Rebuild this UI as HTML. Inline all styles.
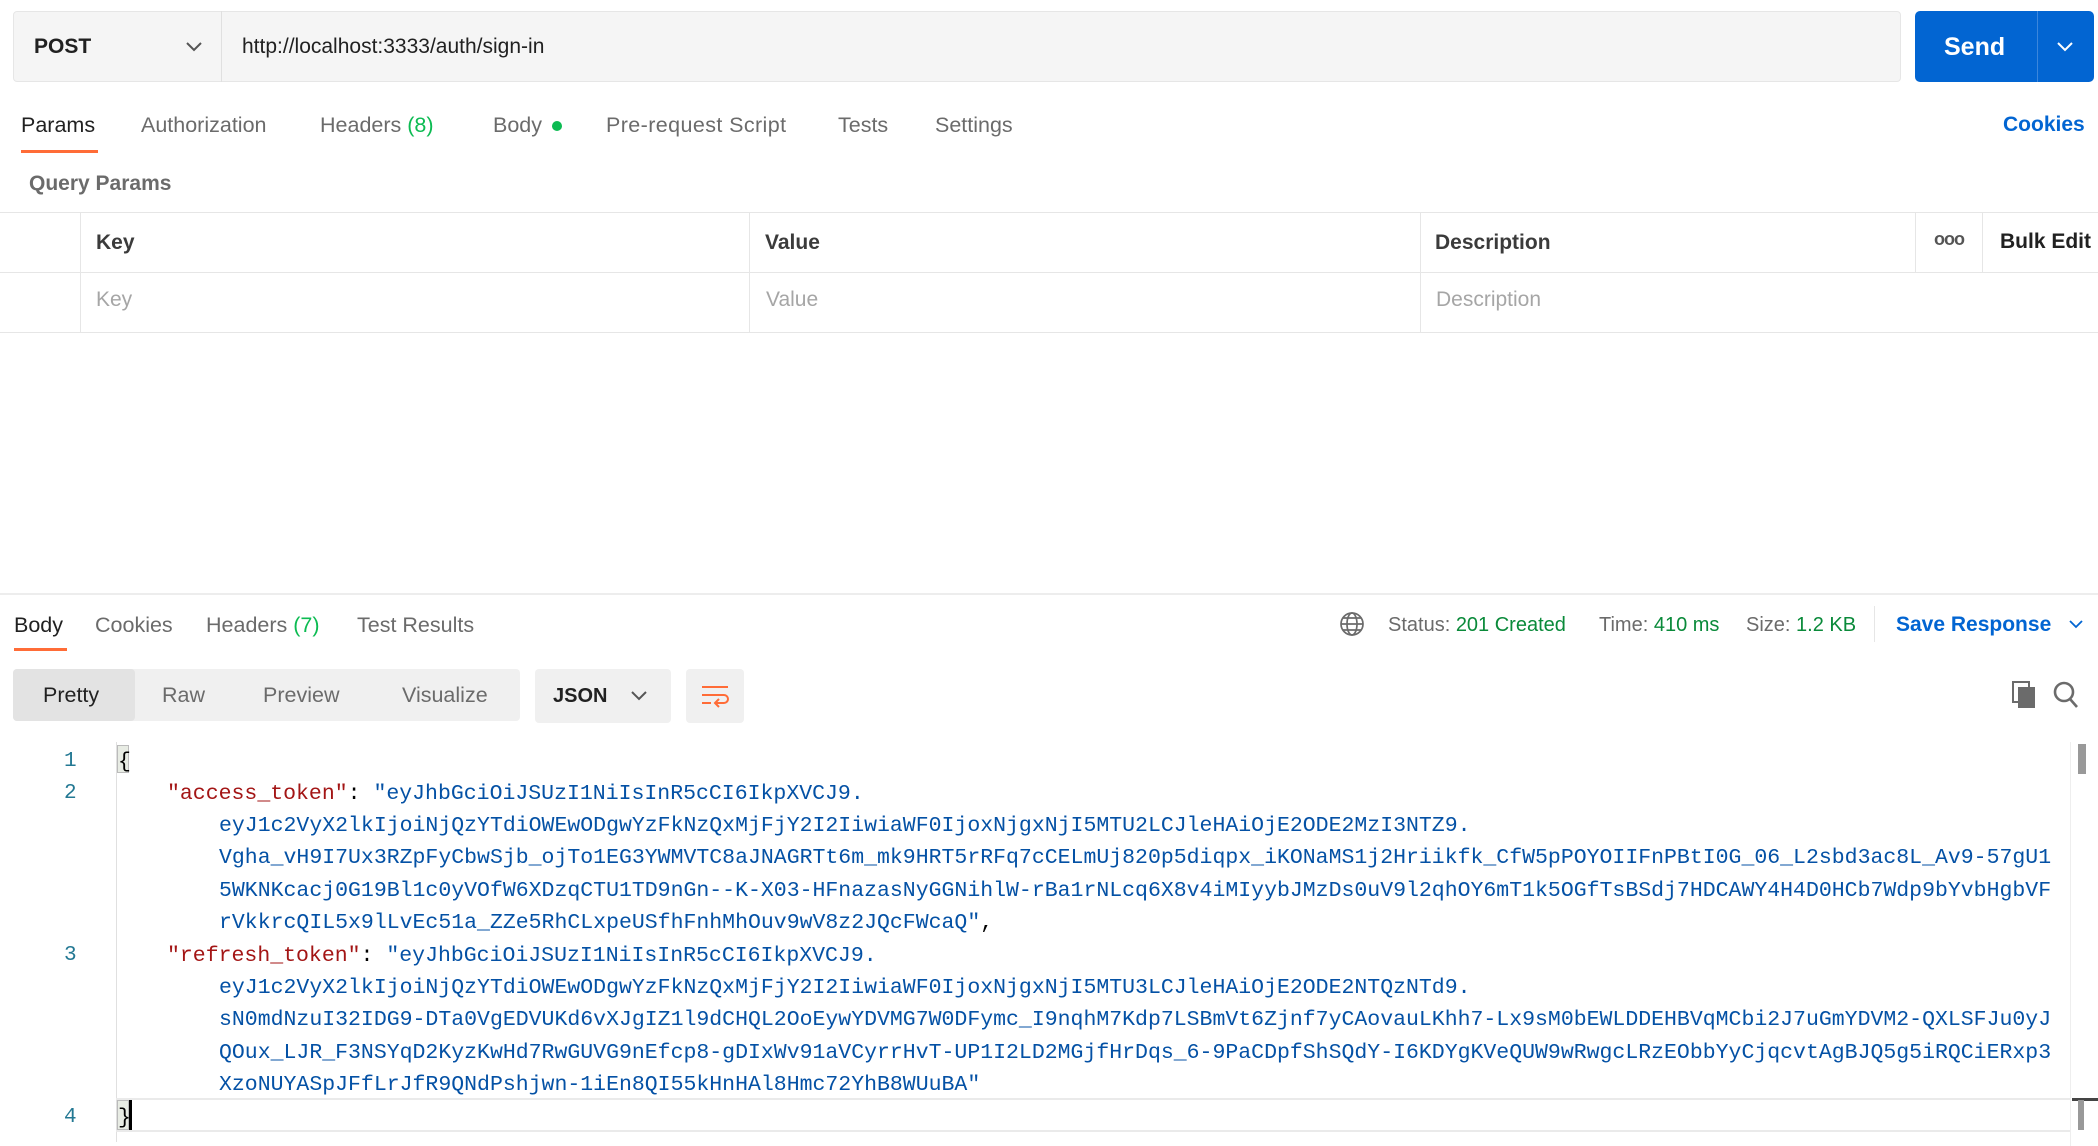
<!DOCTYPE html>
<html><head><meta charset="utf-8"><style>
*{box-sizing:border-box;margin:0;padding:0}
body{width:2098px;height:1146px;background:#fff;font-family:"Liberation Sans",sans-serif;color:#212121;position:relative;overflow:hidden}
.a{position:absolute;white-space:nowrap}
.tab{font-size:21.5px;color:#6b6b6b;top:113px}
.mono{font-family:"Liberation Mono",monospace;font-size:21.5px;color:#0451a5}
.ln{font-family:"Liberation Mono",monospace;font-size:21px;color:#237893;left:64px}
.hd{font-size:21px;font-weight:bold;color:#3b3b3b}
.ph{font-size:21px;color:#a6a6a6}
</style></head><body>
<div class="a" style="left:13px;top:11px;width:1888px;height:71px;background:#f5f5f5;border:1px solid #e6e6e6;border-radius:4px"></div>
<div class="a" style="left:221px;top:11px;width:1px;height:71px;background:#e0e0e0"></div>
<div class="a" style="left:34px;top:35px;font-size:21px;font-weight:bold;color:#212121">POST</div>
<svg class="a" style="left:185px;top:41px" width="18" height="12"><path d="M2 2l7 7 7-7" fill="none" stroke="#555" stroke-width="2"/></svg>
<div class="a" style="left:242px;top:35px;font-size:21px;color:#212121">http://localhost:3333/auth/sign-in</div>
<div class="a" style="left:1915px;top:11px;width:179px;height:71px;background:#0265d2;border-radius:5px"></div>
<div class="a" style="left:2037px;top:11px;width:1px;height:71px;background:#3b86dc"></div>
<div class="a" style="left:1944px;top:33px;font-size:25px;font-weight:bold;color:#fff">Send</div>
<svg class="a" style="left:2056px;top:41px" width="18" height="12"><path d="M2 2l7 7 7-7" fill="none" stroke="#fff" stroke-width="2"/></svg>
<div class="a tab" style="left:21px;color:#212121">Params</div>
<div class="a" style="left:21px;top:150px;width:77px;height:3px;background:#ff6c37"></div>
<div class="a tab" style="left:141px">Authorization</div>
<div class="a tab" style="left:320px">Headers <span style="color:#0cbb52">(8)</span></div>
<div class="a tab" style="left:493px">Body</div>
<div class="a" style="left:552px;top:121px;width:10px;height:10px;border-radius:50%;background:#0cbb52"></div>
<div class="a tab" style="left:606px;letter-spacing:0.4px">Pre-request Script</div>
<div class="a tab" style="left:838px">Tests</div>
<div class="a tab" style="left:935px">Settings</div>
<div class="a" style="left:2003px;top:113px;font-size:21px;font-weight:bold;color:#0265d2">Cookies</div>
<div class="a" style="left:29px;top:172px;font-size:21px;font-weight:bold;color:#6b6b6b">Query Params</div>
<div class="a" style="left:0;top:212px;width:2098px;height:1px;background:#e6e6e6"></div>
<div class="a" style="left:0;top:272px;width:2098px;height:1px;background:#e6e6e6"></div>
<div class="a" style="left:0;top:332px;width:2098px;height:1px;background:#e6e6e6"></div>
<div class="a" style="left:80px;top:212px;width:1px;height:120px;background:#e6e6e6"></div>
<div class="a" style="left:749px;top:212px;width:1px;height:120px;background:#e6e6e6"></div>
<div class="a" style="left:1420px;top:212px;width:1px;height:120px;background:#e6e6e6"></div>
<div class="a" style="left:1915px;top:212px;width:1px;height:60px;background:#e6e6e6"></div>
<div class="a" style="left:1982px;top:212px;width:1px;height:60px;background:#e6e6e6"></div>
<div class="a hd" style="left:96px;top:231px">Key</div>
<div class="a hd" style="left:765px;top:231px">Value</div>
<div class="a hd" style="left:1435px;top:231px">Description</div>
<div class="a" style="left:1934px;top:229px;font-size:18px;font-weight:bold;color:#555;letter-spacing:-1px">ooo</div>
<div class="a hd" style="left:2000px;top:230px;color:#212121">Bulk Edit</div>
<div class="a ph" style="left:96px;top:288px">Key</div>
<div class="a ph" style="left:766px;top:288px">Value</div>
<div class="a ph" style="left:1436px;top:288px">Description</div>
<div class="a" style="left:0;top:593px;width:2098px;height:2px;background:#ededed"></div>
<div class="a tab" style="left:14px;top:613px;color:#212121">Body</div>
<div class="a" style="left:14px;top:648px;width:53px;height:3px;background:#ff6c37"></div>
<div class="a tab" style="left:95px;top:613px">Cookies</div>
<div class="a tab" style="left:206px;top:613px">Headers <span style="color:#0cbb52">(7)</span></div>
<div class="a tab" style="left:357px;top:613px">Test Results</div>
<svg class="a" style="left:1339px;top:611px" width="26" height="26" viewBox="0 0 26 26" fill="none" stroke="#6b6b6b" stroke-width="1.7"><circle cx="13" cy="13" r="11"/><ellipse cx="13" cy="13" rx="5" ry="11"/><path d="M2 13h22M4 7h18M4 19h18"/></svg>
<div class="a" style="left:1388px;top:614px;font-size:20px;color:#6b6b6b">Status: <span style="color:#0a8a3a">201 Created</span></div>
<div class="a" style="left:1599px;top:614px;font-size:20px;color:#6b6b6b">Time: <span style="color:#0a8a3a">410 ms</span></div>
<div class="a" style="left:1746px;top:614px;font-size:20px;color:#6b6b6b">Size: <span style="color:#0a8a3a">1.2 KB</span></div>
<div class="a" style="left:1874px;top:606px;width:1px;height:36px;background:#e6e6e6"></div>
<div class="a" style="left:1896px;top:613px;font-size:21px;font-weight:bold;color:#0265d2">Save Response</div>
<svg class="a" style="left:2068px;top:619px" width="16" height="11"><path d="M2 2l6 6 6-6" fill="none" stroke="#0265d2" stroke-width="1.8"/></svg>
<div class="a" style="left:13px;top:669px;width:507px;height:52px;background:#f0f0f0;border-radius:4px"></div>
<div class="a" style="left:13px;top:669px;width:122px;height:52px;background:#e3e3e3;border-radius:4px"></div>
<div class="a" style="left:43px;top:683px;font-size:21.5px;color:#212121">Pretty</div>
<div class="a" style="left:162px;top:683px;font-size:21.5px;color:#6b6b6b">Raw</div>
<div class="a" style="left:263px;top:683px;font-size:21.5px;color:#6b6b6b">Preview</div>
<div class="a" style="left:402px;top:683px;font-size:21.5px;color:#6b6b6b">Visualize</div>
<div class="a" style="left:535px;top:669px;width:136px;height:54px;background:#f0f0f0;border-radius:4px"></div>
<div class="a" style="left:553px;top:685px;font-size:20px;font-weight:bold;color:#212121">JSON</div>
<svg class="a" style="left:630px;top:690px" width="18" height="12"><path d="M2 2l7 7 7-7" fill="none" stroke="#555" stroke-width="2"/></svg>
<div class="a" style="left:686px;top:669px;width:58px;height:54px;background:#f0f0f0;border-radius:4px"></div>
<svg class="a" style="left:700px;top:683px" width="30" height="26" viewBox="0 0 30 26" fill="none" stroke="#ff6c37" stroke-width="2"><path d="M2 4h26M2 12h22a4 4 0 010 8h-8M19 16l-4 4 4 4M2 20h9"/></svg>
<svg class="a" style="left:2011px;top:680px" width="26" height="30" viewBox="0 0 26 30"><rect x="2" y="2" width="16" height="20" fill="none" stroke="#6b6b6b" stroke-width="2"/><rect x="7" y="7" width="17" height="21" fill="#6b6b6b"/></svg>
<svg class="a" style="left:2052px;top:680px" width="28" height="30" viewBox="0 0 28 30" fill="none" stroke="#6b6b6b" stroke-width="2.6"><circle cx="12" cy="12" r="9"/><path d="M18 19l7 8"/></svg>
<div class="a" style="left:116px;top:742px;width:1px;height:400px;background:#e0e0e0"></div>
<div class="a" style="left:2070px;top:742px;width:1px;height:404px;background:#eee"></div>
<div class="a" style="left:2078px;top:744px;width:8px;height:30px;background:#999"></div>
<div class="a" style="left:116px;top:1098px;width:1954px;height:34px;border-top:2px solid #eaeaea;border-bottom:2px solid #eaeaea"></div>
<div class="a" style="left:2072px;top:1098px;width:26px;height:3px;background:#444"></div>
<div class="a" style="left:2078px;top:1100px;width:6px;height:30px;background:#999"></div>
<div class="a" style="left:117px;top:745px;width:12px;height:28px;background:#e8ece4;border:1px solid #bbb"></div>
<div class="a" style="left:117px;top:1100px;width:12px;height:30px;background:#e8ece4;border:1px solid #bbb"></div>
<div class="a" style="left:129px;top:1100px;width:3px;height:30px;background:#000"></div>
<div class="a ln" style="top:750px">1</div>
<div class="a ln" style="top:782px">2</div>
<div class="a ln" style="top:944px">3</div>
<div class="a ln" style="top:1106px">4</div>
<div class="a mono" style="left:118px;top:750px;color:#000">{</div>
<div class="a mono" style="left:167px;top:782px"><span style="color:#a31515">"access_token"</span><span style="color:#000">: </span>"eyJhbGciOiJSUzI1NiIsInR5cCI6IkpXVCJ9.</div>
<div class="a mono" style="left:219px;top:814px">eyJ1c2VyX2lkIjoiNjQzYTdiOWEwODgwYzFkNzQxMjFjY2I2IiwiaWF0IjoxNjgxNjI5MTU2LCJleHAiOjE2ODE2MzI3NTZ9.</div>
<div class="a mono" style="left:219px;top:846px">Vgha_vH9I7Ux3RZpFyCbwSjb_ojTo1EG3YWMVTC8aJNAGRTt6m_mk9HRT5rRFq7cCELmUj820p5diqpx_iKONaMS1j2Hriikfk_CfW5pPOYOIIFnPBtI0G_06_L2sbd3ac8L_Av9-57gU1</div>
<div class="a mono" style="left:219px;top:879px">5WKNKcacj0G19Bl1c0yVOfW6XDzqCTU1TD9nGn--K-X03-HFnazasNyGGNihlW-rBa1rNLcq6X8v4iMIyybJMzDs0uV9l2qhOY6mT1k5OGfTsBSdj7HDCAWY4H4D0HCb7Wdp9bYvbHgbVF</div>
<div class="a mono" style="left:219px;top:911px">rVkkrcQIL5x9lLvEc51a_ZZe5RhCLxpeUSfhFnhMhOuv9wV8z2JQcFWcaQ"<span style="color:#000">,</span></div>
<div class="a mono" style="left:167px;top:944px"><span style="color:#a31515">"refresh_token"</span><span style="color:#000">: </span>"eyJhbGciOiJSUzI1NiIsInR5cCI6IkpXVCJ9.</div>
<div class="a mono" style="left:219px;top:976px">eyJ1c2VyX2lkIjoiNjQzYTdiOWEwODgwYzFkNzQxMjFjY2I2IiwiaWF0IjoxNjgxNjI5MTU3LCJleHAiOjE2ODE2NTQzNTd9.</div>
<div class="a mono" style="left:219px;top:1008px">sN0mdNzuI32IDG9-DTa0VgEDVUKd6vXJgIZ1l9dCHQL2OoEywYDVMG7W0DFymc_I9nqhM7Kdp7LSBmVt6Zjnf7yCAovauLKhh7-Lx9sM0bEWLDDEHBVqMCbi2J7uGmYDVM2-QXLSFJu0yJ</div>
<div class="a mono" style="left:219px;top:1041px">QOux_LJR_F3NSYqD2KyzKwHd7RwGUVG9nEfcp8-gDIxWv91aVCyrrHvT-UP1I2LD2MGjfHrDqs_6-9PaCDpfShSQdY-I6KDYgKVeQUW9wRwgcLRzEObbYyCjqcvtAgBJQ5g5iRQCiERxp3</div>
<div class="a mono" style="left:219px;top:1073px">XzoNUYASpJFfLrJfR9QNdPshjwn-1iEn8QI55kHnHAl8Hmc72YhB8WUuBA"</div>
<div class="a mono" style="left:118px;top:1106px;color:#000">}</div>
</body></html>
